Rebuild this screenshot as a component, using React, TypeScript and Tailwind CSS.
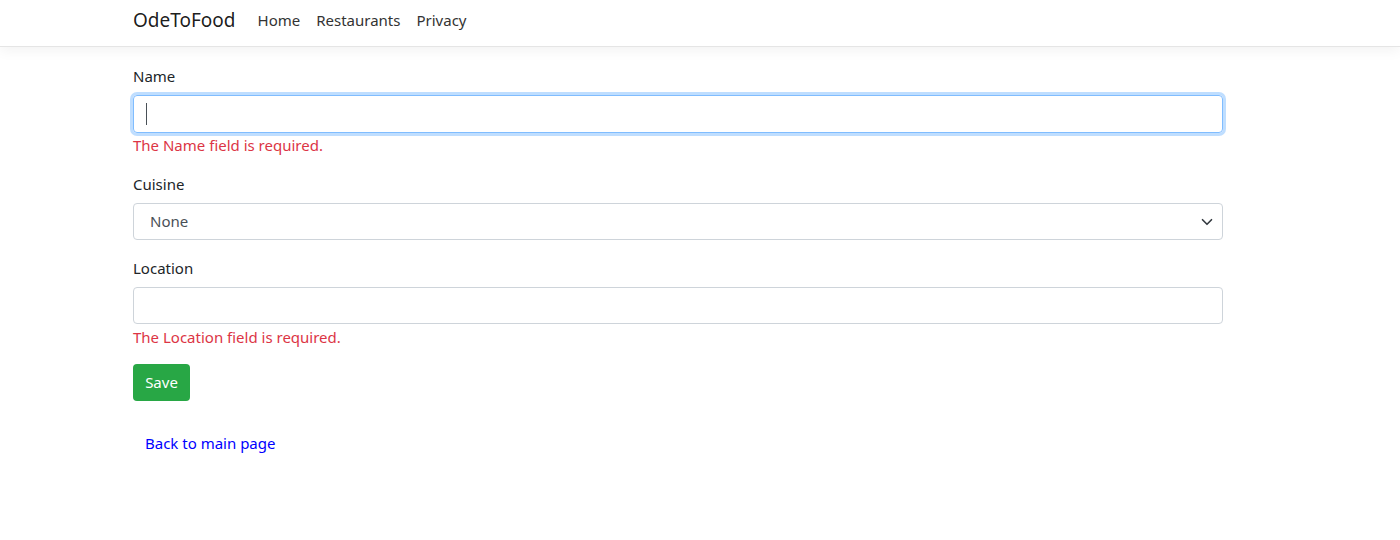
export default function App() {
  return (
    <div className="min-h-[540px] bg-white text-[#212529] font-['Noto_Sans','Open_Sans',sans-serif]">
      <header className="h-[47px] border-b border-[#e5e5e5] bg-white shadow-[0_4px_12px_rgba(0,0,0,0.05)]">
        <nav className="ml-[133px] flex h-full w-[1090px] items-center pb-[6px]">
          <span className="mr-[22px] text-[19px] leading-none text-black/90">OdeToFood</span>
          <div className="flex items-center gap-4 text-[15px] text-[#333]">
            <a href="#">Home</a>
            <a href="#">Restaurants</a>
            <a href="#">Privacy</a>
          </div>
        </nav>
      </header>
      <main className="ml-[133px] w-[1090px] pt-[17px]">
        <form className="flex flex-col gap-4">
          <div>
            <label className="block text-[15px] leading-6">Name</label>
            <div className="mt-[7px] flex h-[38px] items-center rounded border border-[#80bdff] px-3 shadow-[0_0_0_3px_rgba(0,123,255,0.25)]">
              <span className="h-[22px] w-px bg-[#495057]" />
            </div>
            <p className="mt-px text-[15px] leading-[22px] text-[#dc3545]">The Name field is required.</p>
          </div>
          <div>
            <label className="block text-[15px] leading-6">Cuisine</label>
            <div className="mt-[7px] flex h-[37px] items-center justify-between rounded border border-[#ced4da] pl-4 pr-[9px] text-[15px] text-[#495057]">
              <span>None</span>
              <svg width="12" height="12" viewBox="0 0 16 16" fill="none" stroke="#343a40" strokeWidth="2.2" strokeLinecap="round" strokeLinejoin="round">
                <path d="M2 5l6 6 6-6" />
              </svg>
            </div>
          </div>
          <div>
            <label className="block text-[15px] leading-6">Location</label>
            <div className="mt-[7px] h-[37px] rounded border border-[#ced4da]" />
            <p className="mt-[2px] text-[15px] leading-[22px] text-[#dc3545]">The Location field is required.</p>
          </div>
          <div>
            <button type="button" className="h-[37px] w-[57px] rounded bg-[#28a745] text-[15px] text-white">Save</button>
          </div>
        </form>
        <div className="mt-[30px] px-3">
          <a href="#" className="text-[15px] leading-[22px] text-[#0000ff]">Back to main page</a>
        </div>
      </main>
    </div>
  );
}
